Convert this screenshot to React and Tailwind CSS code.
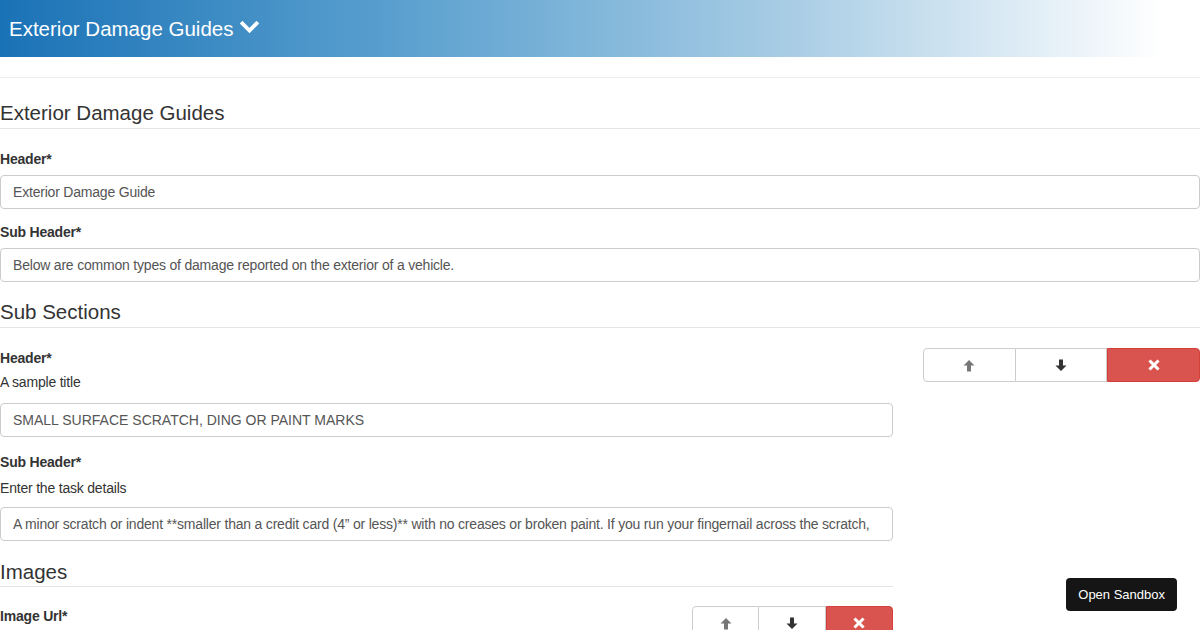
import React from 'react';

const font = { fontFamily: '"Liberation Sans", Arial, sans-serif' };

const ArrowUp = ({ className }) => (
  <svg viewBox="0 0 12 12" className={className} fill="currentColor">
    <path d="M6 0.5 L11.5 6 L8 6 L8 12 L4 12 L4 6 L0.5 6 Z" />
  </svg>
);

const ArrowDown = ({ className }) => (
  <svg viewBox="0 0 12 12" className={className} fill="currentColor">
    <path d="M6 11.5 L11.5 6 L8 6 L8 0 L4 0 L4 6 L0.5 6 Z" />
  </svg>
);

const Remove = ({ className }) => (
  <svg viewBox="0 0 12 12" className={className} fill="none" stroke="currentColor" strokeWidth="3" strokeLinecap="square">
    <path d="M2.5 2.5 L9.5 9.5 M9.5 2.5 L2.5 9.5" />
  </svg>
);

const Chevron = () => (
  <svg viewBox="0 0 19 13" className="w-[19px] h-[13px]" fill="none" stroke="white" strokeWidth="3.8" strokeLinecap="square">
    <path d="M2.5 2.5 L9.5 9.5 L16.5 2.5" />
  </svg>
);

const MoveButtons = () => (
  <div className="flex w-full h-[34px]">
    <button className="flex-1 flex items-center justify-center bg-white border border-[#ccc] rounded-l-[4px] text-[#777]">
      <ArrowUp className="w-[12px] h-[13px]" />
    </button>
    <button className="flex-1 flex items-center justify-center bg-white border border-l-0 border-[#ccc] text-[#333]">
      <ArrowDown className="w-[12px] h-[13px]" />
    </button>
    <button className="flex-1 flex items-center justify-center bg-[#d9534f] border border-[#d43f3a] rounded-r-[4px] text-white">
      <Remove className="w-[12px] h-[12px]" />
    </button>
  </div>
);

const Label = ({ children, className = '' }) => (
  <div className={`text-[14px] leading-[20px] font-bold text-[#333] tracking-[-0.2px] ${className}`}>{children}</div>
);

const Input = ({ value, tight = true }) => (
  <div className={`h-[34px] border border-[#ccc] rounded-[4px] px-[12px] flex items-center text-[14px] text-[#555] bg-white overflow-hidden whitespace-nowrap ${tight ? 'tracking-[-0.2px]' : ''}`}>
    <span className="overflow-hidden">{value}</span>
  </div>
);

const Heading = ({ children, className = '' }) => (
  <div className={`text-[20.5px] leading-[22px] text-[#333] border-b border-[#e5e5e5] ${className}`}>{children}</div>
);

export default function App() {
  return (
    <div className="w-[1200px] h-[630px] bg-white overflow-hidden relative" style={font}>
      <div className="h-[57px] flex items-center px-[9px] bg-[linear-gradient(to_right,#1a72b6_0%,#5aa0cf_33%,#a9cde5_66%,#ffffff_97%)]">
        <span className="text-white text-[20.5px] leading-[22px]">Exterior Damage Guides</span>
        <span className="ml-[7px] mt-[-3px]"><Chevron /></span>
      </div>
      <div className="mt-[20px] border-t border-[#eee]" />

      <Heading className="mt-[24px] pb-[4px]">Exterior Damage Guides</Heading>

      <Label className="mt-[20px]">Header*</Label>
      <div className="mt-[6px]"><Input value="Exterior Damage Guide" /></div>

      <Label className="mt-[13px]">Sub Header*</Label>
      <div className="mt-[6px]"><Input value="Below are common types of damage reported on the exterior of a vehicle." /></div>

      <Heading className="mt-[19px] pb-[4px]">Sub Sections</Heading>

      <div className="grid grid-cols-[893px_1fr] gap-[30px] mt-[20px]">
        <div>
          <Label>Header*</Label>
          <div className="text-[14px] leading-[20px] text-[#333] tracking-[-0.2px] mt-[4px]">A sample title</div>
          <div className="mt-[11px]"><Input value="SMALL SURFACE SCRATCH, DING OR PAINT MARKS" tight={false} /></div>

          <Label className="mt-[15px]">Sub Header*</Label>
          <div className="text-[14px] leading-[20px] text-[#333] tracking-[-0.2px] mt-[6px]">Enter the task details</div>
          <div className="mt-[9px]">
            <Input value="A minor scratch or indent **smaller than a credit card (4” or less)** with no creases or broken paint. If you run your fingernail across the scratch," />
          </div>

          <Heading className="mt-[20px] pb-[3px]">Images</Heading>

          <div className="grid grid-cols-[662px_1fr] gap-[30px] mt-[19px]">
            <div>
              <Label>Image Url*</Label>
            </div>
            <div>
              <MoveButtons />
            </div>
          </div>
        </div>
        <div>
          <MoveButtons />
        </div>
      </div>

      <button className="absolute right-[23px] bottom-[19px] h-[33px] px-[12px] rounded-[4px] bg-[#151515] text-white text-[13px]">
        Open Sandbox
      </button>
    </div>
  );
}
